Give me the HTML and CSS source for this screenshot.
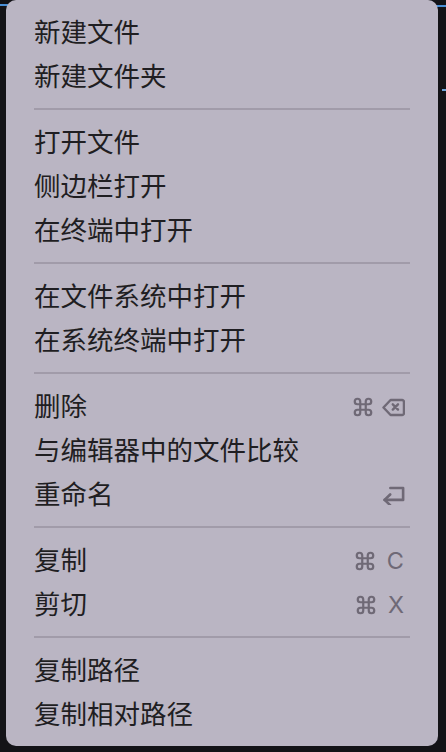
FILE: index.html
```html
<!DOCTYPE html>
<html lang="zh-CN">
<head>
<meta charset="utf-8">
<title>Context menu</title>
<link rel="stylesheet" href="styles.css">
</head>
<body>
<div class="deco deco-left"></div>
<div class="deco deco-right"></div>
<div class="deco deco-right2"></div>
<div class="menu">
  <div class="item"><span class="label">新建文件</span></div>
  <div class="item"><span class="label">新建文件夹</span></div>
  <div class="sep"></div>
  <div class="item"><span class="label">打开文件</span></div>
  <div class="item"><span class="label">侧边栏打开</span></div>
  <div class="item"><span class="label">在终端中打开</span></div>
  <div class="sep"></div>
  <div class="item"><span class="label">在文件系统中打开</span></div>
  <div class="item"><span class="label">在系统终端中打开</span></div>
  <div class="sep"></div>
  <div class="item"><span class="label">删除</span>
    <span class="keys">
      <svg class="cmd" viewBox="0 0 24 24"><path d="M15 6v12a3 3 0 1 0 3-3H6a3 3 0 1 0 3 3V6a3 3 0 1 0-3 3h12a3 3 0 1 0-3-3"/></svg>
      <svg class="del" viewBox="0 0 22 18"><path d="M8.2 1.8h11a1.8 1.8 0 0 1 1.8 1.8v10.8a1.8 1.8 0 0 1-1.8 1.8h-11L1.4 9z"/><path d="M10.3 6l5 5M15.3 6l-5 5"/></svg>
    </span>
  </div>
  <div class="item"><span class="label">与编辑器中的文件比较</span></div>
  <div class="item"><span class="label">重命名</span>
    <span class="keys">
      <svg class="ret" viewBox="0 0 22 18"><path d="M8 1.8h12.2v11.4H2.5"/><path d="M7.8 8l-5.3 5.2 5.3 5"/></svg>
    </span>
  </div>
  <div class="sep"></div>
  <div class="item"><span class="label">复制</span>
    <span class="keys">
      <svg class="cmd" viewBox="0 0 24 24"><path d="M15 6v12a3 3 0 1 0 3-3H6a3 3 0 1 0 3 3V6a3 3 0 1 0-3 3h12a3 3 0 1 0-3-3"/></svg>
      <span class="key">C</span>
    </span>
  </div>
  <div class="item"><span class="label">剪切</span>
    <span class="keys">
      <svg class="cmd" viewBox="0 0 24 24"><path d="M15 6v12a3 3 0 1 0 3-3H6a3 3 0 1 0 3 3V6a3 3 0 1 0-3 3h12a3 3 0 1 0-3-3"/></svg>
      <span class="key">X</span>
    </span>
  </div>
  <div class="sep"></div>
  <div class="item"><span class="label">复制路径</span></div>
  <div class="item"><span class="label">复制相对路径</span></div>
</div>
</body>
</html>
```

FILE: styles.css
```css
html, body {
  margin: 0;
  padding: 0;
}
body {
  background: #131317;
  width: 446px;
  height: 752px;
  overflow: hidden;
  position: relative;
  font-family: "Noto Sans CJK SC", "Noto Sans", sans-serif;
}
.deco {
  position: absolute;
  background: #4a8fd6;
  height: 2px;
}
.deco-left { left: 0; top: 4px; width: 8px; }
.deco-right { right: 0; top: 5px; width: 10px; }
.deco-right2 { right: 0; top: 89px; width: 4px; background: #6ea4d8; }
.menu {
  position: relative;
  margin-left: 6px;
  width: 432px;
  height: 746px;
  box-sizing: border-box;
  padding: 11px 0 9px;
  background: #bab5c3;
  border-radius: 10px;
}
.item {
  height: 44px;
  display: flex;
  align-items: center;
  justify-content: space-between;
  padding: 0 33px 0 28px;
}
.label {
  font-size: 26.5px;
  line-height: 40px;
  padding-bottom: 4px;
  color: #1f1e22;
}
.keys {
  display: flex;
  align-items: center;
  gap: 8px;
  color: #6f6976;
}
.keys svg {
  fill: none;
  stroke: #6f6976;
  stroke-linecap: round;
  stroke-linejoin: round;
  display: block;
}
.cmd {
  width: 22px;
  height: 22px;
  stroke-width: 2.4;
}
.del {
  width: 23px;
  height: 19px;
  stroke-width: 2.3;
}
.ret {
  width: 23px;
  height: 19px;
  stroke-width: 2.5;
}
.key {
  font-family: "Inter", "Liberation Sans", sans-serif;
  font-size: 23.5px;
  line-height: 24px;
  margin-left: 3px;
  margin-right: 1px;
  color: #6f6976;
}
.sep {
  height: 2px;
  margin: 9px 28px 11px;
  background: #a19ba9;
}
```
